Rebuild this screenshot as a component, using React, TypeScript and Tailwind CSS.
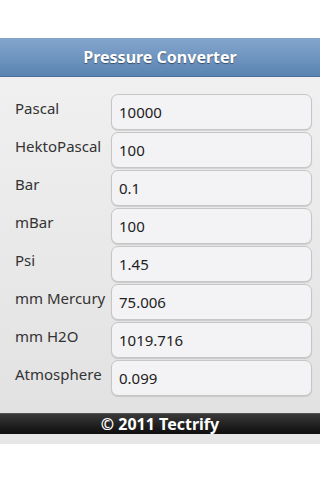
import React from "react";

const rows: [string, string][] = [
  ["Pascal", "10000"],
  ["HektoPascal", "100"],
  ["Bar", "0.1"],
  ["mBar", "100"],
  ["Psi", "1.45"],
  ["mm Mercury", "75.006"],
  ["mm H2O", "1019.716"],
  ["Atmosphere", "0.099"],
];

export default function App() {
  return (
    <div className="w-[320px] h-[480px] bg-white" style={{ fontFamily: '"Noto Sans", "Open Sans", sans-serif' }}>
      <div className="h-[38px]" />
      <div className="h-[39px] flex items-center justify-center bg-gradient-to-b from-[#84a6cd] to-[#5b84b2] border-b border-[#4a6f99]">
        <span className="text-white font-bold text-[16px] [text-shadow:0_1px_1px_rgba(0,0,0,0.45)]">Pressure Converter</span>
      </div>
      <div className="bg-gradient-to-b from-[#f0f0f0] to-[#e2e2e2] pt-[17px] pb-[17px] pl-[15px] pr-[8px] flex flex-col gap-[2px]">
        {rows.map(([label, value]) => (
          <div key={label} className="flex h-[36px]">
            <div className="w-[96px] text-[15px] leading-[20px] pt-[4px] text-[#333]">{label}</div>
            <div className="flex-1 rounded-[7px] border border-[#c6c6c6] bg-[#f3f3f5] shadow-[0_1px_1px_rgba(0,0,0,0.12)] flex items-center pl-[7px] text-[15px] text-[#222]">
              {value}
            </div>
          </div>
        ))}
      </div>
      <div className="h-[21px] flex items-center justify-center bg-gradient-to-b from-[#3a3a3a] to-[#0e0e0e] border-t border-[#555]">
        <span className="text-white font-bold text-[16px]">© 2011 Tectrify</span>
      </div>
      <div className="h-[10px] bg-[#e6e6e6]" />
    </div>
  );
}
